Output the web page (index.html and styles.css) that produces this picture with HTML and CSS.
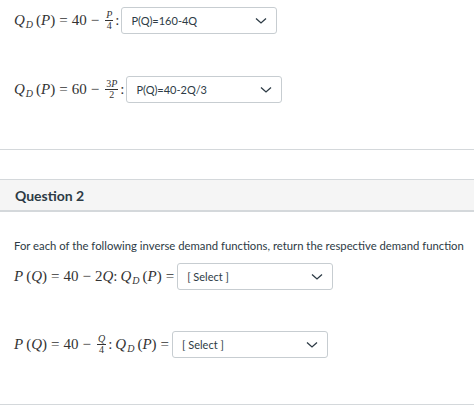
FILE: index.html
```html
<!DOCTYPE html>
<html lang="en">
<head>
    <meta charset="UTF-8">
    <meta name="viewport" content="width=device-width, initial-scale=1.0">
    <title>Quiz</title>
    <link rel="stylesheet" href="styles.css">
</head>
<body>
    <div class="answers">
        <div class="row first">
            <span class="math"><i>Q</i><sub><i>D</i></sub><span class="paren">(<i>P</i>)</span><span class="op">=</span>40<span class="op">−</span><span class="frac"><i>P</i><span>4</span></span>:</span>
            <div class="select"><span>P(Q)=160-4Q</span><svg width="12" height="8" viewBox="0 0 12 8"><polyline points="1,1.5 6,6 11,1.5" fill="none" stroke="#2d3b45" stroke-width="1.3"/></svg></div>
        </div>
        <div class="row second">
            <span class="math"><i>Q</i><sub><i>D</i></sub><span class="paren">(<i>P</i>)</span><span class="op">=</span>60<span class="op">−</span><span class="frac"><span>3<i>P</i></span><span>2</span></span>:</span>
            <div class="select"><span>P(Q)=40-2Q/3</span><svg width="12" height="8" viewBox="0 0 12 8"><polyline points="1,1.5 6,6 11,1.5" fill="none" stroke="#2d3b45" stroke-width="1.3"/></svg></div>
        </div>
    </div>

    <div class="question">
        <div class="header">Question 2</div>
        <p class="text">For each of the following inverse demand functions, return the respective demand function</p>
        <div class="row third">
            <span class="math"><i>P</i><span class="paren">(<i>Q</i>)</span><span class="op">=</span>40<span class="op">−</span>2<i>Q</i>:<span class="gap"></span><i>Q</i><sub><i>D</i></sub><span class="paren">(<i>P</i>)</span><span class="op last">=</span></span>
            <div class="select"><span>[ Select ]</span><svg width="12" height="8" viewBox="0 0 12 8"><polyline points="1,1.5 6,6 11,1.5" fill="none" stroke="#2d3b45" stroke-width="1.3"/></svg></div>
        </div>
        <div class="row fourth">
            <span class="math"><i>P</i><span class="paren">(<i>Q</i>)</span><span class="op">=</span>40<span class="op">−</span><span class="frac"><i>Q</i><span>4</span></span>:<span class="gap"></span><i>Q</i><sub><i>D</i></sub><span class="paren">(<i>P</i>)</span><span class="op last">=</span></span>
            <div class="select"><span>[ Select ]</span><svg width="12" height="8" viewBox="0 0 12 8"><polyline points="1,1.5 6,6 11,1.5" fill="none" stroke="#2d3b45" stroke-width="1.3"/></svg></div>
        </div>
    </div>
</body>
</html>
```

FILE: styles.css
```css
body {
    margin: 0;
    font-family: Lato, "Liberation Sans", sans-serif;
    color: #2d3b45;
    background: #fff;
}
.answers {
    padding-top: 7px;
    padding-bottom: 46px;
    border-bottom: 1px solid #d4d8db;
}
.row {
    display: flex;
    align-items: center;
    height: 27px;
    padding-left: 14px;
}
.second {
    margin-top: 42px;
}
.math {
    font-family: "Liberation Serif", serif;
    font-size: 15px;
    color: #333;
    white-space: nowrap;
    margin-right: 2px;
    display: inline-flex;
    align-items: center;
}
.math i {
    font-style: italic;
}
.math sub {
    font-size: 10px;
    position: relative;
    top: 4px;
    margin-left: 1px;
}
.paren {
    margin-left: 3px;
}
.op {
    margin: 0 4px;
}
.op.last {
    margin-right: 1px;
}
.gap {
    width: 3px;
}
.frac {
    display: inline-flex;
    flex-direction: column;
    align-items: center;
    font-size: 10px;
    line-height: 10px;
    margin: 0 2px;
}
.frac > *:first-child {
    border-bottom: 1px solid #333;
    padding: 0 1px;
}
.select {
    height: 25px;
    border: 1px solid #c7cdd1;
    border-radius: 3px;
    display: flex;
    align-items: center;
    justify-content: space-between;
    padding: 0 9px;
    font-size: 11px;
    background: #fff;
    width: 136px;
}
.question {
    margin-top: 29px;
    border-bottom: 1px solid #d4d8db;
    padding-bottom: 46px;
}
.header {
    background: #f5f5f5;
    border-top: 1px solid #d4d8db;
    border-bottom: 2px solid #d4d8db;
    height: 30px;
    line-height: 31px;
    padding-left: 15px;
    font-size: 14px;
    font-weight: bold;
}
.text {
    margin: 27px 0 0 14px;
    font-size: 11.3px;
    white-space: nowrap;
}
.third {
    margin-top: 11px;
}
.fourth {
    margin-top: 41px;
}
```
